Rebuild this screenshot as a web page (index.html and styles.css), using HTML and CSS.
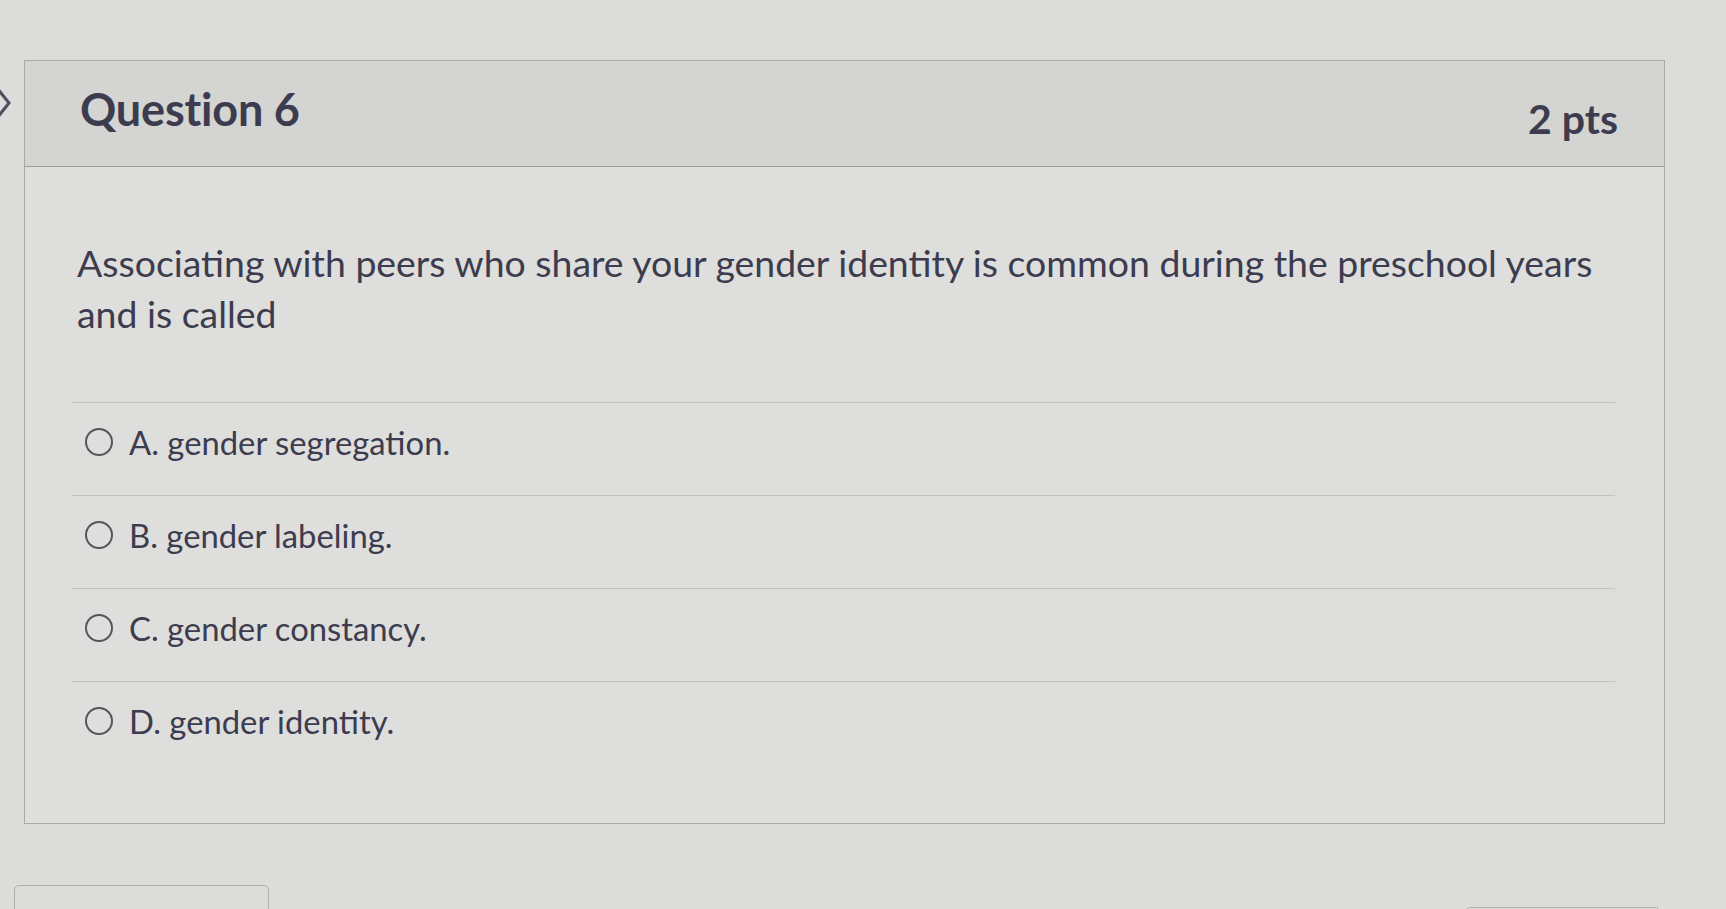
FILE: index.html
```html
<!DOCTYPE html>
<html lang="en">
<head>
<meta charset="utf-8">
<title>Question 6</title>
<link rel="stylesheet" href="styles.css">
</head>
<body>
<div class="page">
  <div class="row">
    <div class="side">
      <svg class="chevron" width="24" height="34" viewBox="0 0 24 34"><polyline points="-3,2 9,17 -3,32" fill="none" stroke="#4d4d5e" stroke-width="3"/></svg>
    </div>
    <div class="card">
      <div class="card-header">
        <h2 class="q-title">Question 6</h2>
        <span class="q-points">2 pts</span>
      </div>
      <div class="card-body">
        <p class="q-text">Associating with peers who share your gender identity is common during the preschool years and is called</p>
        <ul class="answers">
          <li class="answer"><span class="radio"></span><span class="label">A. gender segregation.</span></li>
          <li class="answer"><span class="radio"></span><span class="label">B. gender labeling.</span></li>
          <li class="answer"><span class="radio"></span><span class="label">C. gender constancy.</span></li>
          <li class="answer"><span class="radio"></span><span class="label">D. gender identity.</span></li>
        </ul>
      </div>
    </div>
  </div>
  <div class="footer">
    <div class="btn-box left"></div>
    <div class="btn-box right"></div>
  </div>
</div>
</body>
</html>
```
FILE: styles.css
```css
html, body {
  margin: 0;
  padding: 0;
}
body {
  background: #dcdcda;
  font-family: Lato, "Open Sans", Arial, sans-serif;
  color: #3c3c4e;
  width: 1726px;
  height: 909px;
  overflow: hidden;
}
.page {
  padding-top: 60px;
}
.row {
  display: flex;
  align-items: flex-start;
}
.side {
  width: 24px;
  flex: 0 0 24px;
  padding-top: 26px;
}
.chevron {
  display: block;
}
.card {
  width: 1641px;
  height: 764px;
  box-sizing: border-box;
  border: 1px solid #a9a9a7;
  background: #dededc;
  display: flex;
  flex-direction: column;
}
.card-header {
  height: 106px;
  box-sizing: border-box;
  background: #d4d4d2;
  border-bottom: 1px solid #9e9e9c;
  display: flex;
  align-items: center;
  justify-content: space-between;
  padding: 0 46px 0 55px;
}
.q-title {
  margin: 0 0 10px 0;
  font-size: 45px;
  font-weight: 700;
  letter-spacing: -0.2px;
}
.q-points {
  font-size: 41px;
  font-weight: 700;
  padding-top: 10px;
}
.card-body {
  padding: 70px 30px 0 47px;
}
.q-text {
  margin: 0 0 63px 5px;
  font-size: 37.4px;
  line-height: 51px;
}
.answers {
  list-style: none;
  margin: 0 19px 0 0;
  padding: 0;
}
.answer {
  border-top: 1px solid #c2c2c0;
  height: 93px;
  box-sizing: border-box;
  display: flex;
  align-items: center;
  padding: 0 0 14px 13px;
}
.radio {
  width: 24px;
  height: 24px;
  border: 2px solid #55555f;
  border-radius: 50%;
  flex: 0 0 auto;
  margin-right: 16px;
}
.label {
  font-size: 32.8px;
}
.footer {
  display: flex;
  align-items: flex-start;
  justify-content: space-between;
  margin-top: 61px;
  padding-left: 14px;
  padding-right: 66px;
}
.btn-box {
  height: 40px;
  border: 1px solid #b0b0ae;
  border-radius: 5px;
  box-sizing: border-box;
}
.btn-box.left {
  width: 255px;
}
.btn-box.right {
  width: 195px;
  margin-top: 22px;
}
```
